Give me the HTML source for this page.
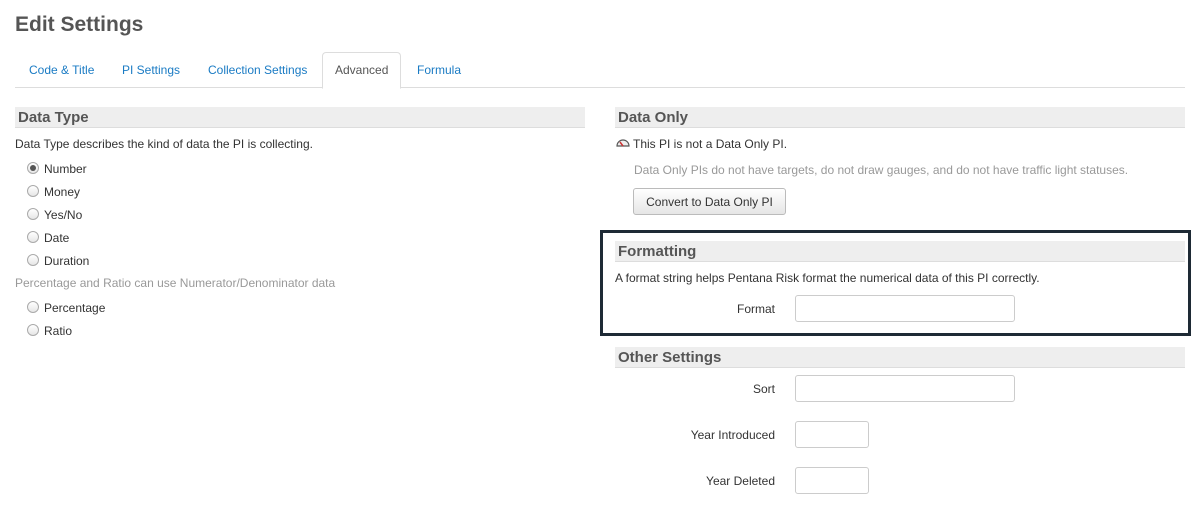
<!DOCTYPE html><html><head><style>
body{margin:0;width:1201px;height:519px;background:#fff;font-family:"Liberation Sans",sans-serif;font-size:12px;color:#333;position:relative;overflow:hidden}
.a{position:absolute;white-space:nowrap}
.h{position:absolute;background:#eee;border-bottom:1px solid #ddd;height:21px;font-weight:bold;font-size:15px;color:#555;line-height:22px;padding-left:3px;box-sizing:border-box}
.t{color:#1a7bc4}
.r{position:absolute;width:10px;height:10px;border:1px solid #aaa;border-radius:50%;background:linear-gradient(#fff,#e6e6e6)}
.in{position:absolute;border:1px solid #ccc;border-radius:3px;height:27px;box-sizing:border-box;background:#fff}
.lab{position:absolute;width:160px;text-align:right;left:615px}
</style></head><body>
<div class="a" style="left:15px;top:13px;font-size:21px;font-weight:bold;color:#555">Edit Settings</div>
<div class="a" style="left:15px;top:87px;width:1170px;border-top:1px solid #ddd"></div>
<div class="a" style="left:322px;top:52px;width:77px;height:35px;border:1px solid #ddd;border-bottom:1px solid #fff;border-radius:4px 4px 0 0;background:#fff"></div>
<div class="a t" style="left:29px;top:63px">Code &amp; Title</div>
<div class="a t" style="left:122px;top:63px">PI Settings</div>
<div class="a t" style="left:208px;top:63px">Collection Settings</div>
<div class="a" style="left:335px;top:63px;color:#555">Advanced</div>
<div class="a t" style="left:417px;top:63px">Formula</div>

<div class="h" style="left:15px;top:107px;width:570px">Data Type</div>
<div class="a" style="left:15px;top:137px">Data Type describes the kind of data the PI is collecting.</div>
<div class="r" style="left:27px;top:162px"><div style="position:absolute;left:2px;top:2px;width:6px;height:6px;border-radius:50%;background:#555"></div></div>
<div class="a" style="left:44px;top:162px">Number</div>
<div class="r" style="left:27px;top:185px"></div><div class="a" style="left:44px;top:185px">Money</div>
<div class="r" style="left:27px;top:208px"></div><div class="a" style="left:44px;top:208px">Yes/No</div>
<div class="r" style="left:27px;top:231px"></div><div class="a" style="left:44px;top:231px">Date</div>
<div class="r" style="left:27px;top:254px"></div><div class="a" style="left:44px;top:254px">Duration</div>
<div class="a" style="left:15px;top:276px;color:#999">Percentage and Ratio can use Numerator/Denominator data</div>
<div class="r" style="left:27px;top:301px"></div><div class="a" style="left:44px;top:301px">Percentage</div>
<div class="r" style="left:27px;top:324px"></div><div class="a" style="left:44px;top:324px">Ratio</div>

<div class="h" style="left:615px;top:107px;width:570px">Data Only</div>
<svg class="a" style="left:616px;top:137px" width="14" height="10" viewBox="0 0 14 10"><path d="M1 9 A6 6 0 0 1 13 9 Z" fill="#eee" stroke="#555" stroke-width="1.2"/><path d="M7 9 L4 5" stroke="#c33" stroke-width="1.5"/></svg>
<div class="a" style="left:633px;top:137px">This PI is not a Data Only PI.</div>
<div class="a" style="left:634px;top:163px;color:#999">Data Only PIs do not have targets, do not draw gauges, and do not have traffic light statuses.</div>
<div class="a" style="left:633px;top:188px;width:153px;height:27px;box-sizing:border-box;border:1px solid #bbb;border-radius:3px;background:linear-gradient(#fff,#e6e6e6);text-align:center;line-height:26px;color:#333">Convert to Data Only PI</div>

<div class="a" style="left:600px;top:230px;width:591px;height:106px;box-sizing:border-box;border:3px solid #1e2a35"></div>
<div class="h" style="left:615px;top:241px;width:570px">Formatting</div>
<div class="a" style="left:615px;top:271px">A format string helps Pentana Risk format the numerical data of this PI correctly.</div>
<div class="lab" style="top:302px">Format</div>
<div class="in" style="left:795px;top:295px;width:220px"></div>

<div class="h" style="left:615px;top:347px;width:570px">Other Settings</div>
<div class="lab" style="top:382px">Sort</div>
<div class="in" style="left:795px;top:375px;width:220px"></div>
<div class="lab" style="top:428px">Year Introduced</div>
<div class="in" style="left:795px;top:421px;width:74px"></div>
<div class="lab" style="top:474px">Year Deleted</div>
<div class="in" style="left:795px;top:467px;width:74px"></div>
</body></html>
